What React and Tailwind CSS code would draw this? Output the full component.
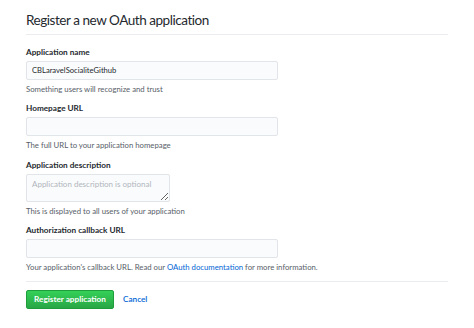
export default function App() {
  const font = { fontFamily: 'Lato, "Noto Sans", sans-serif' };
  return (
    <div className="w-[474px] h-[328px] bg-white pl-[26px] pt-[9px]" style={font}>
      <div className="w-[422px]">
        <h1 className="text-[13.5px] leading-[22px] tracking-[-0.45px] font-normal text-[#24292e]">
          Register a new OAuth application
        </h1>
        <div className="mt-[3px] h-px bg-[#eaecef]" />

        <Field label="Application name" help="Something users will recognize and trust" className="mt-[10.5px]">
          <input
            readOnly
            value="CBLaravelSocialiteGithub"
            className="w-[252px] h-[19px] px-[5px] text-[7.6px] text-[#24292e] bg-[#fafbfc] border border-[#e1e4e8] rounded-[2px] outline-none"
          />
        </Field>

        <Field label="Homepage URL" help="The full URL to your application homepage" className="mt-[7.5px]">
          <input
            readOnly
            className="w-[252px] h-[19px] px-[5px] text-[7.6px] bg-[#fafbfc] border border-[#e1e4e8] rounded-[2px] outline-none"
          />
        </Field>

        <Field label="Application description" help="This is displayed to all users of your application" className="mt-[7.5px]">
          <textarea
            readOnly
            placeholder="Application description is optional"
            className="block w-[144px] h-[28px] px-[5px] py-[3px] text-[8px] leading-[12px] placeholder-[#b0b6bd] bg-[#fafbfc] border border-[#e1e4e8] rounded-[2px] outline-none resize"
          />
        </Field>

        <Field
          label="Authorization callback URL"
          className="mt-[7.5px]"
          help={
            <>
              Your application's callback URL. Read our{" "}
              <span className="text-[#0366d6]">OAuth documentation</span> for more information.
            </>
          }
        >
          <input
            readOnly
            className="w-[252px] h-[19px] px-[5px] text-[7.6px] bg-[#fafbfc] border border-[#e1e4e8] rounded-[2px] outline-none"
          />
        </Field>

        <div className="mt-[8px] h-px bg-[#eaecef]" />

        <div className="mt-[8px] flex items-center gap-[9px]">
          <button className="h-[19px] w-[88px] text-[8.2px] font-bold text-white rounded-[2px] border border-[#1f9c3b] bg-gradient-to-b from-[#34d058] to-[#28a745]">
            Register application
          </button>
          <span className="text-[8.2px] font-semibold text-[#0366d6]">Cancel</span>
        </div>
      </div>
    </div>
  );
}

function Field({ label, help, children, className = "" }) {
  return (
    <div className={className}>
      <div className="text-[8.2px] leading-[13px] font-bold text-[#24292e]">{label}</div>
      <div className="mt-[2px] flex">{children}</div>
      <div className="mt-[3px] text-[7.75px] leading-[12px] text-[#586069]">{help}</div>
    </div>
  );
}
